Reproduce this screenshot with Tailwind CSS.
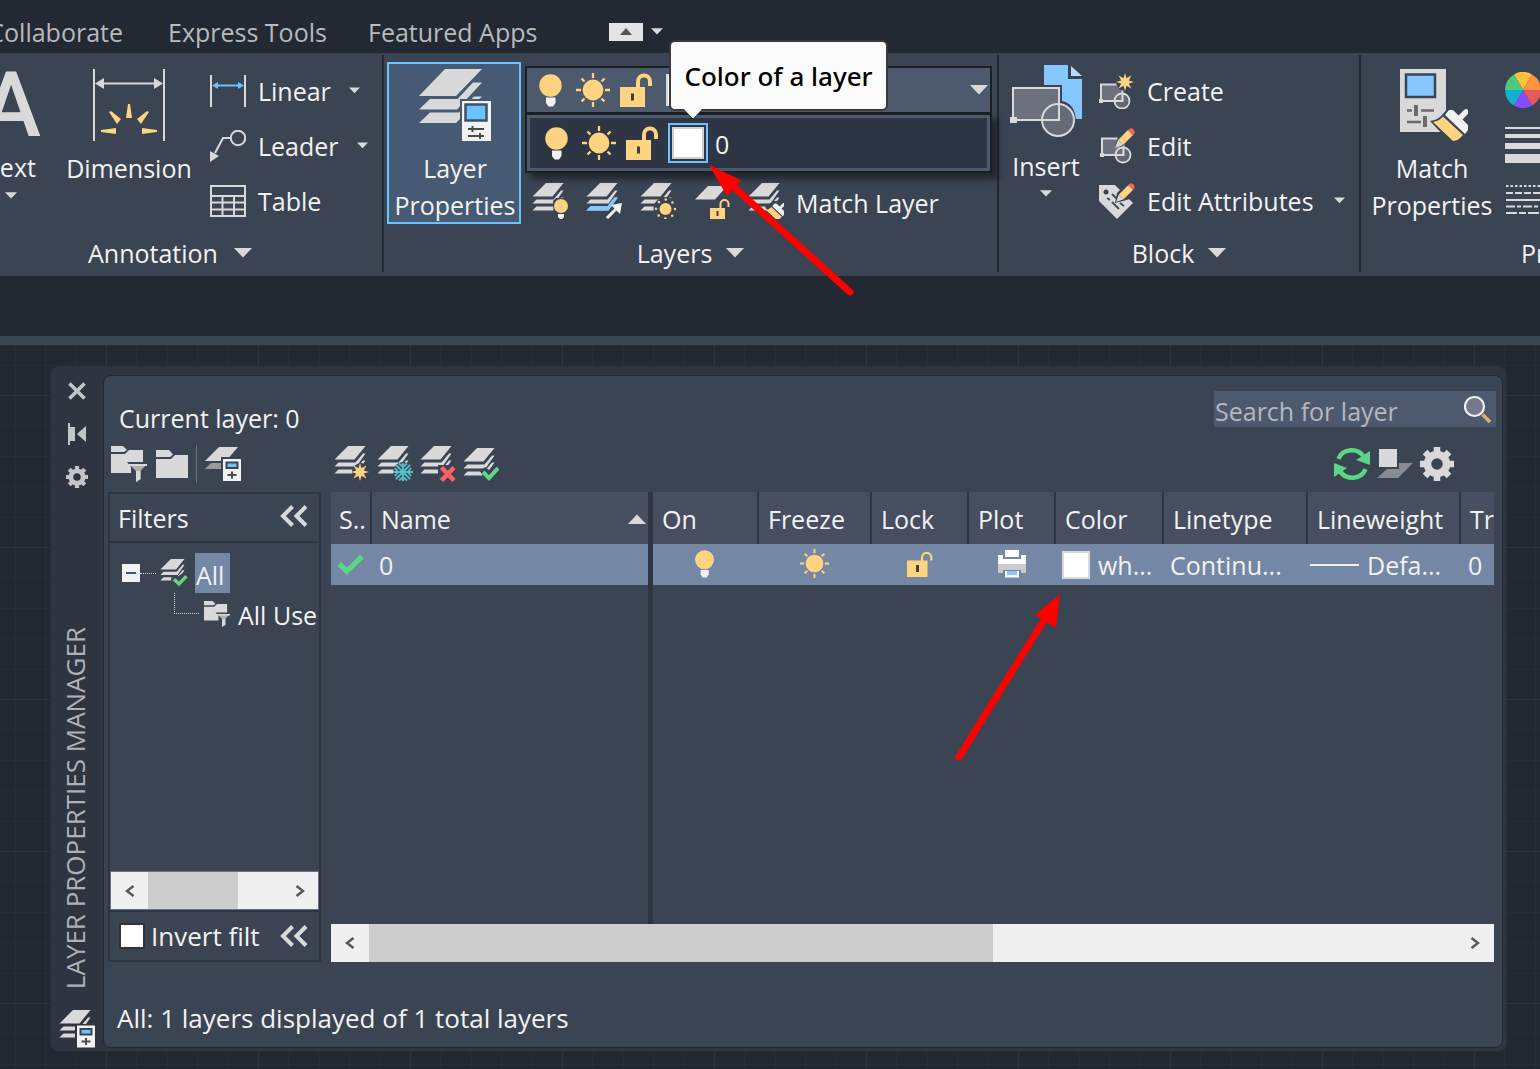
<!DOCTYPE html>
<html lang="en">
<head>
  <meta charset="UTF-8">
  <meta name="viewport" content="width=device-width, initial-scale=1.0">
  <title>Layer Properties Manager</title>
  <script src="https://cdn.jsdelivr.net/npm/@tailwindcss/browser@4"></script>
</head>
<body class="min-h-screen flex flex-col overflow-x-hidden bg-[#222933] text-[#f2f2f2] text-[25px] leading-9 font-['Open_Sans','Noto_Sans',sans-serif]">

<!-- ===================== Icon sprite ===================== -->
<svg class="hidden" aria-hidden="true">
  <symbol id="caret" viewBox="0 0 18 10"><path d="M0 0H18L9 9.500Z" fill="#d9d9d9"/></symbol>
  <symbol id="bulb" viewBox="0 0 23 33"><circle cx="11.500" cy="11.500" r="11.200" fill="#ffd37f"/><path d="M7 23.500H16.500V29L14 32.500H9.500L7 29Z" fill="#f2f2f2"/></symbol>
  <symbol id="sun" viewBox="0 0 34 34"><circle cx="17" cy="17" r="10.400" fill="#ffd37f"/><path d="M17 0V5M17 29V34M0 17H5M29 17H34M5.500 5.500L8.500 8.500M25.500 25.500L28.500 28.500M28.500 5.500L25.500 8.500M8.500 25.500L5.500 28.500" stroke="#ffd37f" stroke-width="2.300"/></symbol>
  <symbol id="lock" viewBox="0 0 33 34"><path d="M0 14H25V34H0Z" fill="#ffd37f"/><path d="M18 15V8.500a6 6 0 0 1 12 0V13" fill="none" stroke="#ffd37f" stroke-width="4"/><path d="M11 20.500H14V27.500H11Z" fill="#3b4048"/></symbol>
  <symbol id="lock-thin" viewBox="0 0 26 26"><path d="M0 9.500H20.500V26H0Z" fill="#ffd37f"/><path d="M15 10V6.500a4.700 4.700 0 0 1 9.400 0V9.500" fill="none" stroke="#ffd37f" stroke-width="2.200"/><path d="M9 14H12V21H9Z" fill="#3b4048"/></symbol>
  <!-- three stacked sheets, shared by every layer tool -->
  <symbol id="sheets" viewBox="0 0 36 36"><path d="M14 0H31.500L20.500 13.500H.5ZM.5 20.500L4.500 16.500H21.500L29 7.500H31.500L22.500 20.500ZM.5 27.500L4.500 23.500H21.500L29 14.500H31.500L22.500 27.500Z" fill="#d9d9d9"/></symbol>
  <symbol id="star" viewBox="0 0 18 18"><path d="M9 0L10.500 5.200L15.400 2.600L12.800 7.500L18 9L12.800 10.500L15.400 15.400L10.500 12.800L9 18L7.500 12.800L2.600 15.400L5.200 10.500L0 9L5.200 7.500L2.600 2.600L7.500 5.200Z" fill="#ffd37f"/></symbol>
  <symbol id="check" viewBox="0 0 26 20"><path d="M2 9.500L9.500 16.500L24 2.500" fill="none" stroke="#5cd685" stroke-width="5"/></symbol>
  <symbol id="card" viewBox="0 0 18 22"><path d="M0 0H18V22H0Z" fill="#f2f2f2"/><path d="M3.500 3.500H14.500V9H3.500Z" fill="#6cc1ff" stroke="#3b4453" stroke-width="2"/><path d="M4.500 16H13.500M9 12.500V19.500" stroke="#4a4a4a" stroke-width="2"/></symbol>
  <symbol id="brush" viewBox="0 0 38 32"><path d="M2 13Q8 12 12 7.500L32 26L28 30Q25 32 22 32Z" fill="#ffd37f"/><path d="M14 6L17.500 1.500Q20 0 22.500 1.500L37 16Q38.500 18.500 37 21L34 25Z" fill="#f2f2f2"/><path d="M28 10L35 3" stroke="#f2f2f2" stroke-width="5.500" stroke-linecap="round"/></symbol>
  <symbol id="pencil" viewBox="0 0 20 20"><path d="M3 12L13 2L18 7L8 17Z" fill="#ffd37f"/><path d="M13 2Q16 -1 18.500 1.500T18 7Z" fill="#ff5f62"/><path d="M3 12L8 17L0 20Z" fill="#d9d9d9"/></symbol>
  <symbol id="shapes" viewBox="0 0 36 27"><path d="M2 1.500H23.500V18H2Z" fill="#6c717e" stroke="#d9d9d9" stroke-width="2"/><path d="M0 16H4V20H0Z" fill="#d9d9d9"/><circle cx="23" cy="18" r="7.500" fill="#6c717e" fill-opacity=".8" stroke="#d9d9d9" stroke-width="1.800"/><path d="M23.500 11V18H16" fill="none" stroke="#d9d9d9" stroke-width="2"/></symbol>
  <symbol id="folder" viewBox="0 0 32 28"><path d="M0 0H13L17 4.500L14 7H0ZM0 9H15L19 5H32V28H0Z" fill="#d9d9d9"/></symbol>
  <symbol id="folder-filter" viewBox="0 0 36 36"><path d="M0 0H12L16 4L13 6H0ZM0 8H14L18 4H32V16H16L20 21V27H0Z" fill="#d9d9d9"/><path d="M18 18H36L29.500 25V33L25 36V25Z" fill="#b0b0b0"/><path d="M25 25H29.500V33L25 36ZM18 18H36V20H18Z" fill="#d9d9d9"/></symbol>
  <symbol id="gear" viewBox="0 0 34 34"><circle cx="17" cy="17" r="9.500" fill="none" stroke="currentColor" stroke-width="7.500"/><path d="M17 0V6M17 28V34M0 17H6M28 17H34M5 5L9 9M25 25L29 29M29 5L25 9M9 25L5 29" stroke="currentColor" stroke-width="6.500"/></symbol>
  <symbol id="collapse" viewBox="0 0 28 22"><path d="M12.500 1.500L3 11L12.500 20.500M26 1.500L16.500 11L26 20.500" fill="none" stroke="#d9d9d9" stroke-width="4"/></symbol>
  <symbol id="chev-left" viewBox="0 0 10 12"><path d="M8.500 1L2 6L8.500 11" fill="none" stroke="#5a5a5a" stroke-width="2.600"/></symbol>
  <symbol id="chev-right" viewBox="0 0 10 12"><path d="M1.500 1L8 6L1.500 11" fill="none" stroke="#5a5a5a" stroke-width="2.600"/></symbol>
</svg>

<!-- ===================== Ribbon tabs ===================== -->
<nav class="flex items-center h-[53px] pt-[14px] pb-1 text-[#b8babd] shrink-0">
  <a href="#" class="w-[123px] flex justify-end whitespace-nowrap">Collaborate</a>
  <a href="#" class="ml-[45px] w-[155px] whitespace-nowrap">Express Tools</a>
  <a href="#" class="ml-[45px] w-[170px] whitespace-nowrap">Featured Apps</a>
  <button class="ml-[71px] flex items-center gap-2" aria-label="Minimize ribbon">
    <svg class="w-[34px] h-[18px]" viewBox="0 0 34 18"><path d="M0 0H34V18H0Z" fill="#e4e4e4"/><path d="M17 5L23 12H11Z" fill="#555"/></svg>
    <svg class="w-3 h-[7px]"><use href="#caret"/></svg>
  </button>
</nav>

<!-- ===================== Ribbon ===================== -->
<header class="flex h-[223px] shrink-0 bg-[#3b4453] pt-[2px] pb-1">

  <!-- Annotation -->
  <section class="w-[384px] shrink-0 flex flex-col border-r-2 border-[#222831]">
    <div class="flex h-[181px]">
      <button class="-ml-[31px] w-[84px] shrink-0 flex flex-col items-center pt-[13px]">
        <span class="h-[81px] text-[90px] leading-[76px] font-medium text-[#d9d9d9] font-['Roboto',sans-serif]">A</span>
        <span>Text</span>
        <svg class="mt-[7px] w-3 h-[7px]"><use href="#caret"/></svg>
      </button>
      <button class="ml-px w-[150px] shrink-0 flex flex-col items-center pt-[14px]">
        <svg class="w-[72px] h-[72px] mb-[9px]" viewBox="0 0 72 72">
          <path d="M1 0V72M71 0V72M6 14.500H66" stroke="#d9d9d9" stroke-width="2"/>
          <path d="M2 14.500L11 9V20ZM70 14.500L61 9V20Z" fill="#d9d9d9"/>
          <path d="M35 35H37L39 49H33ZM16 43L18 42L28 50L24 55ZM56 43L54 42L44 50L48 55ZM8 61L23 59V65L8 63ZM64 61L49 59V65L64 63Z" fill="#ffd37f"/>
        </svg>
        <span>Dimension</span>
      </button>
      <div class="flex-1 flex flex-col pl-[6px] pt-2 whitespace-nowrap">
        <button class="flex items-center h-[55px] gap-3">
          <svg class="w-9 h-8" viewBox="0 0 36 32"><path d="M1 0V32M35 0V32" stroke="#d9d9d9" stroke-width="2"/><path d="M6 10.500H30" stroke="#6cc1ff" stroke-width="2"/><path d="M2 10.500L8 7V14ZM34 10.500L28 7V14Z" fill="#6cc1ff"/></svg>
          <span>Linear</span>
          <svg class="ml-[6px] w-[11px] h-[7px]"><use href="#caret"/></svg>
        </button>
        <button class="flex items-center h-[55px] gap-3">
          <svg class="w-9 h-8" viewBox="0 0 36 32"><circle cx="28" cy="8" r="7.200" fill="none" stroke="#d9d9d9" stroke-width="2"/><path d="M21 8H13L5 23" fill="none" stroke="#d9d9d9" stroke-width="2"/><path d="M0 21L9 26L0 32Z" fill="#d9d9d9"/></svg>
          <span>Leader</span>
          <svg class="ml-[6px] w-[11px] h-[7px]"><use href="#caret"/></svg>
        </button>
        <button class="flex items-center h-[55px] gap-3">
          <svg class="w-9 h-8" viewBox="0 0 36 32"><path d="M1 1H35V31H1ZM1 11H35M1 17.500H35M1 24.500H35M12.500 11V31M24 11V31" fill="none" stroke="#d9d9d9" stroke-width="2"/></svg>
          <span>Table</span>
        </button>
      </div>
    </div>
    <button class="flex items-center gap-4 self-start mt-[3px] ml-[88px] h-10">Annotation <svg class="w-[18px] h-[10px]"><use href="#caret"/></svg></button>
  </section>

  <!-- Layers -->
  <section class="w-[615px] shrink-0 flex flex-col border-r-2 border-[#222831]">
    <div class="flex h-[181px] pl-[3px] gap-1">
      <button class="mt-[7px] w-[134px] h-[162px] shrink-0 flex flex-col items-center pt-[5px] border-2 border-[#6cc1ff] bg-[#465b73] leading-[37px]">
        <svg class="ml-[2px] w-[72px] h-[74px] mb-[7px] shrink-0" viewBox="0 0 72 74">
          <path d="M26 0H63L37 27H0ZM0 40.500L11 30H38.500L54 13.500H63L38 40.500ZM0 54L11 43.500H40L55 27.500H63L37 54Z" fill="#d9d9d9"/>
          <path d="M41 30H72V74H41Z" fill="#465b73"/><path d="M43 32H72V72H43Z" fill="#f2f2f2"/>
          <path d="M46.500 35.500H67.500V51.500H46.500Z" fill="#6cc1ff" stroke="#3e5068" stroke-width="2.500"/>
          <path d="M49 60H65M49 67H65M53.500 57V63M61 64V70" stroke="#4a4a4a" stroke-width="2"/>
        </svg>
        <span class="ml-[2px]">Layer</span>
        <span class="ml-[2px]">Properties</span>
      </button>

      <div class="relative w-[467px] pt-[11px]">
        <button class="relative w-full h-12 flex items-center pl-3 bg-[#4d5a6e] border-2 border-[#1b2027]" aria-haspopup="listbox" aria-expanded="true" aria-label="Current layer">
          <svg class="w-[23px] h-[33px]"><use href="#bulb"/></svg>
          <svg class="ml-[14px] w-[34px] h-[34px]"><use href="#sun"/></svg>
          <svg class="ml-[10px] w-[33px] h-[34px]"><use href="#lock"/></svg>
          <span class="ml-[13px] w-8 h-8 bg-white border-2 border-[#d9d9d9]"></span>
          <svg class="ml-auto mr-[2px] w-[18px] h-[10px]"><use href="#caret"/></svg>
        </button>

        <!-- open layer list -->
        <ul class="absolute left-0 top-[58px] w-full h-[60px] p-[3px] bg-[#4d5a6e] border-2 border-[#1b2027] shadow-[6px_6px_6px_rgba(0,0,0,0.45)]" role="listbox" aria-label="Layers">
          <li class="h-full flex items-center pl-[15px] bg-[#2e3645]" role="option" aria-selected="true">
            <svg class="w-[23px] h-[33px]"><use href="#bulb"/></svg>
            <svg class="ml-[14px] w-[34px] h-[34px]"><use href="#sun"/></svg>
            <svg class="ml-[10px] w-[33px] h-[34px]"><use href="#lock"/></svg>
            <button class="ml-[9px] w-10 h-10 p-[2px] border-2 border-[#6cc1ff]" aria-label="Layer color"><span class="block w-8 h-8 bg-white border-2 border-[#d0d0d0]"></span></button>
            <span class="ml-[7px] pt-[2px]">0</span>
          </li>
        </ul>

        <!-- callout -->
        <div class="absolute z-10 left-[144px] -top-[15px] w-[219px] h-[71px] flex items-center justify-center rounded-md border-2 border-[#3a3a3a] bg-[#fcfcfc] text-black text-[26px] font-medium font-['Noto_Sans',sans-serif] whitespace-nowrap" role="tooltip">Color of a layer
          <svg class="absolute left-3 top-[66px] w-[20px] h-[12px]" viewBox="0 0 20 12"><path d="M0 0H20L10 11Z" fill="#fcfcfc"/><path d="M0 1L10 11L20 1" fill="none" stroke="#3a3a3a"/></svg>
        </div>
        <svg class="absolute z-10 left-[180px] top-[106px] w-[152px] h-[136px]" viewBox="0 0 152 136"><path d="M20 18L145 131" stroke="#f00" stroke-width="7" stroke-linecap="round"/><path d="M4 4L36 19L22 35Z" fill="#f00"/></svg>

        <div class="mt-[67px] pl-[7px] flex items-center gap-[18px]">
          <button aria-label="Off"><svg class="w-9 h-9" viewBox="0 0 36 36"><use href="#sheets"/><path d="M21 18L24 15H36V36H22Z" fill="#3b4453"/><circle cx="29" cy="23" r="7" fill="#ffd37f"/><path d="M26 31H32V34L30 36H28L26 34Z" fill="#f2f2f2"/></svg></button>
          <button aria-label="Make current"><svg class="w-9 h-9" viewBox="0 0 36 36"><use href="#sheets"/><path d="M.5 27.500L4.500 23H21.500L28 14.500H32L22.500 27.500Z" fill="#84c8ff"/><path d="M21 35L31 25" stroke="#3b4453" stroke-width="6"/><path d="M21 35L31 25" stroke="#f2f2f2" stroke-width="3"/><path d="M36 20L34 31L25 22Z" fill="#f2f2f2"/></svg></button>
          <button aria-label="Freeze"><svg class="w-9 h-9" viewBox="0 0 36 36"><use href="#sheets"/><circle cx="25.500" cy="26" r="12" fill="#3b4453"/><circle cx="25.500" cy="26" r="6" fill="#ffd37f"/><circle cx="25.500" cy="26" r="9.500" fill="none" stroke="#ffd37f" stroke-width="2.600" stroke-dasharray="0 7.460" stroke-linecap="round"/></svg></button>
          <button aria-label="Lock"><svg class="w-9 h-9" viewBox="0 0 36 36"><path d="M14 3H33L21 16.500H1Z" fill="#d9d9d9"/><path d="M24 16H36V36H24Z" fill="#3b4453"/><path d="M16 25H31V36H16Z" fill="#ffd37f"/><path d="M26.500 25V21a4 4 0 0 1 8 0V24" fill="none" stroke="#ffd37f" stroke-width="2"/><path d="M22.500 28H24.500V33H22.500Z" fill="#3b4453"/></svg></button>
          <button class="flex items-center gap-3 whitespace-nowrap"><svg class="w-9 h-9" viewBox="0 0 36 36"><use href="#sheets"/><path d="M17 24L25 18H36V36H26Z" fill="#3b4453"/><use href="#brush" x="17" y="20" width="20" height="17"/></svg><span class="pt-1">Match Layer</span></button>
        </div>
      </div>
    </div>
    <button class="flex items-center gap-[14px] self-center mt-[3px] h-10">Layers <svg class="w-[18px] h-[10px]"><use href="#caret"/></svg></button>
  </section>

  <!-- Block -->
  <section class="w-[362px] shrink-0 flex flex-col border-r-2 border-[#222831]">
    <div class="flex h-[181px]">
      <button class="ml-[6px] w-[82px] shrink-0 flex flex-col items-center pt-[10px]">
        <svg class="w-[72px] h-[72px] mb-[11px]" viewBox="0 0 72 72">
          <path d="M34 0H58V14H72V54H66Q64 38 52 36V20H34Z" fill="#84c8ff"/><path d="M61 1L72 11H61Z" fill="#b5dcff"/>
          <path d="M3 23H49V55H3Z" fill="#6c717e" stroke="#d9d9d9" stroke-width="2"/><path d="M0 52H7V58H0Z" fill="#d9d9d9"/>
          <circle cx="48" cy="55" r="16" fill="#6c717e" fill-opacity=".85" stroke="#d9d9d9" stroke-width="2"/><path d="M49 39V55H32" fill="none" stroke="#d9d9d9" stroke-width="2"/>
        </svg>
        <span>Insert</span>
        <svg class="mt-[6px] w-3 h-[7px]"><use href="#caret"/></svg>
      </button>
      <div class="flex-1 flex flex-col pl-3 pt-2 whitespace-nowrap">
        <button class="flex items-center h-[55px] gap-3">
          <svg class="w-9 h-9" viewBox="0 0 36 36"><use href="#shapes" y="10" width="36" height="27"/><circle cx="26" cy="9" r="9" fill="#3b4453"/><use href="#star" x="17" width="18" height="18"/></svg>
          <span>Create</span>
        </button>
        <button class="flex items-center h-[55px] gap-3">
          <svg class="w-9 h-9" viewBox="0 0 36 36"><use href="#shapes" x="1" y="9" width="36" height="27"/><path d="M16 19L19 9L30 -2L38 4L24 18Z" fill="#3b4453"/><use href="#pencil" x="16" width="20" height="20"/></svg>
          <span>Edit</span>
        </button>
        <button class="flex items-center h-[55px] gap-3">
          <svg class="w-9 h-9" viewBox="0 0 36 36"><path d="M0 2H16L34 20L18 36L0 18Z" fill="#d9d9d9"/><circle cx="7" cy="9" r="2.500" fill="#3b4453"/><path d="M8 15L11 17M13 11L20 18M13 19L20 26M21 20L25 23" stroke="#4a4f58" stroke-width="2"/><path d="M16 20L18 10L30 -2L38 4V14L24 18Z" fill="#3b4453"/><use href="#pencil" x="17" width="19" height="19"/></svg>
          <span>Edit Attributes</span>
          <svg class="ml-2 w-[11px] h-[7px]"><use href="#caret"/></svg>
        </button>
      </div>
    </div>
    <button class="flex items-center gap-[14px] self-center mt-[3px] h-10">Block <svg class="w-[18px] h-[10px]"><use href="#caret"/></svg></button>
  </section>

  <!-- Properties, runs past the window edge -->
  <section class="flex-1 min-w-0 overflow-hidden flex flex-col">
    <div class="flex h-[181px]">
      <button class="ml-[3px] w-[136px] shrink-0 flex flex-col items-center pt-[14px] leading-[37px]">
        <svg class="ml-1 w-[68px] h-[72px] mb-[9px] shrink-0" viewBox="0 0 68 72">
          <path d="M0 0H46V63H0Z" fill="#d9d9d9"/><path d="M6 5.500H35V28H6Z" fill="#84c8ff" stroke="#3b4453" stroke-width="2.500"/>
          <path d="M7 41.500H12M21 41.500H34M7 53H21" stroke="#6a6a6a" stroke-width="2.500"/><path d="M14 36H18V47H14ZM23 47H27V58H23Z" fill="#6a6a6a"/>
          <path d="M30 52Q38 51 42 46L48 39L68 42V72H49Z" fill="#3b4453"/><use href="#brush" x="31" y="40" width="38" height="32"/>
        </svg>
        <span>Match</span>
        <span>Properties</span>
      </button>
      <div class="flex flex-col pl-[5px] pt-[17px] gap-[19px]">
        <svg class="w-9 h-9" viewBox="0 0 36 36"><path d="M18 18L9 2.400A18 18 0 0 1 27 2.400Z" fill="#ffc13b"/><path d="M18 18L27 2.400A18 18 0 0 1 36 18Z" fill="#ff9340"/><path d="M18 18H36A18 18 0 0 1 27 33.600Z" fill="#e65a5a"/><path d="M18 18L27 33.600A18 18 0 0 1 9 33.600Z" fill="#854dff"/><path d="M18 18L9 33.600A18 18 0 0 1 0 18Z" fill="#12b0cf"/><path d="M18 18H0A18 18 0 0 1 9 2.400Z" fill="#4ccb7d"/></svg>
        <svg class="w-9 h-9" viewBox="0 0 36 36"><path d="M0 0H36V2H0ZM0 7H36V11H0ZM0 16H36V22H0ZM0 27H36V36H0Z" fill="#d9d9d9"/></svg>
        <svg class="w-9 h-9" viewBox="0 0 36 36" stroke="#d9d9d9" stroke-width="2"><path d="M1 4H36" stroke-dasharray="2.500 2"/><path d="M1 11H36" stroke-dasharray="7 2"/><path d="M1 18H36"/><path d="M1 24.500H36" stroke-dasharray="9 2 4 2"/><path d="M1 31H36" stroke-dasharray="11 2 7 2"/></svg>
      </div>
    </div>
    <button class="flex items-center self-start mt-[3px] ml-[160px] h-10">Properties</button>
  </section>
</header>

<div class="h-[60px] shrink-0"></div>
<div class="h-[9px] shrink-0 bg-[#3b4453]"></div>

<!-- ===================== Drawing area ===================== -->
<main class="relative flex-1 flex bg-[#212830] pt-[21px] pr-[33px] pb-[17px] pl-[50px]">
  <svg class="absolute inset-0 w-full h-full" aria-hidden="true">
    <defs>
      <pattern id="grid" x="106" y="50" width="152" height="152" patternUnits="userSpaceOnUse">
        <path d="M30.500 0V152M61.500 0V152M91.500 0V152M122.500 0V152M0 30.500H152M0 61.500H152M0 91.500H152M0 122.500H152" stroke="#252d37"/>
        <path d="M.5 0V152M0 .5H152" stroke="#2d3541"/>
      </pattern>
    </defs>
    <rect width="100%" height="100%" fill="url(#grid)"/>
  </svg>

  <!-- Palette -->
  <section class="relative flex-1 min-w-0 flex rounded-lg bg-[#2e3440] border border-[#272e39] pt-2 pr-[3px] pb-[3px]">
    <!-- Title strip -->
    <div class="w-[52px] shrink-0 flex flex-col items-center text-[#c3c5c8]">
      <button class="mt-[7px]" aria-label="Close"><svg class="w-[18px] h-[18px]" viewBox="0 0 18 18"><path d="M1.500 1.500L16.500 16.500M16.500 1.500L1.500 16.500" stroke="currentColor" stroke-width="3.600"/></svg></button>
      <button class="mt-[23px]" aria-label="Auto-hide"><svg class="w-[18px] h-[22px]" viewBox="0 0 18 22"><path d="M0 0H2V4H7V18H2V22H0ZM18 3V19L9 11Z" fill="currentColor"/></svg></button>
      <button class="mt-[21px]" aria-label="Palette settings"><svg class="w-[22px] h-[22px]"><use href="#gear"/></svg></button>
      <h2 class="mt-auto mr-1 rotate-180 [writing-mode:vertical-rl] text-[26px] leading-8 text-[#aeb1b6] whitespace-nowrap">LAYER PROPERTIES MANAGER</h2>
      <svg class="mt-[21px] w-9 h-[38px] shrink-0" viewBox="0 0 36 38"><use href="#sheets" width="36" height="36"/><path d="M16 14H36V38H16Z" fill="#2e3440"/><use href="#card" x="18" y="15" width="18" height="23"/></svg>
    </div>

    <div class="flex-1 min-w-0 flex flex-col rounded-lg border border-[#222834] bg-[#3b4453] pl-1 pr-[8px]">
      <div class="mt-[15px] h-9 flex justify-between -mr-[2px]">
        <p class="pl-[11px] pt-[9px] whitespace-nowrap">Current layer: 0</p>
        <label class="w-[282px] h-9 flex items-center bg-[#4d5a6e]">
          <input type="text" placeholder="Search for layer" aria-label="Search for layer" class="w-[246px] pl-px pt-1 bg-transparent outline-none placeholder:text-[#b4b8bf]">
          <svg class="ml-[3px] w-[29px] h-[29px]" viewBox="0 0 29 29"><circle cx="11.500" cy="11.500" r="9.500" fill="#747a89" stroke="#f2f2f2" stroke-width="2.200"/><path d="M19.500 19.500L27 27" stroke="#deb06c" stroke-width="3.500"/></svg>
        </label>
      </div>

      <!-- Palette toolbar -->
      <div class="mt-[19px] h-9 flex items-center">
        <div class="pl-[3px] w-[226px] flex items-center">
          <button aria-label="New property filter"><svg class="w-9 h-9"><use href="#folder-filter"/></svg></button>
          <button class="ml-[9px]" aria-label="New group filter"><svg class="w-8 h-7"><use href="#folder"/></svg></button>
          <span class="mx-2 w-px h-[38px] bg-[#6b7280]"></span>
          <button aria-label="Layer states manager"><svg class="w-9 h-9" viewBox="0 0 36 36"><path d="M14 1H33L21 15H0Z" fill="#d9d9d9"/><path d="M6 17H18V23H0Z" fill="#9a9a9a"/><path d="M16 11H36V36H16Z" fill="#3b4453"/><use href="#card" x="18" y="13" width="18" height="22"/></svg></button>
        </div>
        <div class="flex items-center gap-[7px]">
          <button aria-label="New layer"><svg class="w-9 h-9" viewBox="0 0 36 36"><use href="#sheets"/><circle cx="27" cy="26" r="9" fill="#3b4453"/><use href="#star" x="17" y="17" width="18" height="18"/></svg></button>
          <button aria-label="New layer frozen in viewports"><svg class="w-9 h-9" viewBox="0 0 36 36"><use href="#sheets"/><circle cx="26" cy="26" r="10" fill="#3b4453"/><path d="M26 17V35M16 26H36M19 19L33 33M33 19L19 33M22 17.500L26 21L30 17.500M22 34.500L26 31L30 34.500M18 22L21 26L18 30M34 22L31 26L34 30" fill="none" stroke="#58bcc6" stroke-width="2"/></svg></button>
          <button aria-label="Delete layer"><svg class="w-9 h-9" viewBox="0 0 36 36"><use href="#sheets"/><path d="M18 19H36V36H18Z" fill="#3b4453"/><path d="M21.500 21.500L34 34.500M34 21.500L21.500 34.500" stroke="#ff5f62" stroke-width="4.500"/></svg></button>
          <button aria-label="Set current"><svg class="w-9 h-9" viewBox="0 0 36 36"><use href="#sheets" y="2"/><path d="M17 25L22 21L26 24L33 18L36 20V34H22Z" fill="#3b4453"/><path d="M20 26L26 32L35 22" fill="none" stroke="#5cd685" stroke-width="4"/></svg></button>
        </div>
        <div class="ml-auto mr-10 flex items-center gap-[7px]">
          <button aria-label="Refresh"><svg class="w-9 h-[34px]" viewBox="0 0 36 34"><path d="M4.500 12A14 13 0 0 1 30 10M31.500 22A14 13 0 0 1 6 24" fill="none" stroke="#5cd685" stroke-width="4.500"/><path d="M36 4V18L22 13ZM0 30V16L13 21Z" fill="#5cd685"/></svg></button>
          <button aria-label="Toggle override highlight"><svg class="w-9 h-[30px]" viewBox="0 0 36 30"><path d="M10 20H22V14H36L21 29H0Z" fill="#868b94"/><path d="M2 0H20V18H2Z" fill="#d9d9d9"/></svg></button>
          <button class="text-[#d9d9d9]" aria-label="Settings"><svg class="w-[34px] h-[34px]"><use href="#gear"/></svg></button>
        </div>
      </div>

      <div class="mt-[10px] flex-1 flex gap-[10px]">
        <!-- Filter tree -->
        <aside class="w-[213px] shrink-0 flex flex-col border-2 border-[#2e3440]">
          <div class="h-[49px] flex items-center justify-between pl-2 pr-[11px] border-b-2 border-[#2e3440]">
            <h3>Filters</h3>
            <button class="-mt-1" aria-label="Collapse filters"><svg class="w-7 h-[22px]"><use href="#collapse"/></svg></button>
          </div>
          <ul class="flex-1 pt-[10px] overflow-hidden whitespace-nowrap">
            <li class="relative flex items-center h-10 pl-3">
              <button class="w-[18px] h-[18px] flex items-center justify-center bg-[#f2f2f2]" aria-label="Collapse tree"><span class="w-[10px] h-[2px] bg-[#3a50a8]"></span></button>
              <span class="w-4 border-t border-dotted border-[#d9d9d9]"></span>
              <svg class="ml-1 w-7 h-7" viewBox="0 0 36 36"><use href="#sheets"/><path d="M14 24L24 22L33 15L36 18V36H16Z" fill="#3b4453"/><path d="M18 26L24.500 32L34 22" fill="none" stroke="#5cd685" stroke-width="4.500"/></svg>
              <span class="ml-[7px] px-px pt-1 w-[35px] h-10 bg-[#7487a5]">All</span>
            </li>
            <li class="flex items-start h-10 pl-16">
              <span class="w-[25px] h-[21px] shrink-0 border-l border-b border-dotted border-[#d9d9d9]"></span>
              <svg class="ml-1 mt-2 w-7 h-[26px] shrink-0"><use href="#folder-filter"/></svg>
              <span class="ml-[7px] mt-1">All Use</span>
            </li>
          </ul>
          <div class="mx-px mb-px h-[37px] flex items-center bg-[#f0f0f0] outline outline-[#6b7280]">
            <button class="w-[37px] flex justify-center" aria-label="Scroll left"><svg class="w-[10px] h-3"><use href="#chev-left"/></svg></button>
            <span class="w-[90px] h-full bg-[#cdcdcd]"></span>
            <button class="ml-auto w-[37px] flex justify-center" aria-label="Scroll right"><svg class="w-[10px] h-3"><use href="#chev-right"/></svg></button>
          </div>
          <div class="h-[50px] flex items-center pl-[9px] pr-[11px] border-t-2 border-[#2e3440]">
            <input id="invert" type="checkbox" class="appearance-none w-[26px] h-[26px] shrink-0 bg-white border-2 border-[#333]">
            <label for="invert" class="ml-[6px] w-[115px] text-[26px] whitespace-nowrap">Invert filt</label>
            <button class="ml-auto shrink-0" aria-label="Collapse filter pane"><svg class="w-7 h-[22px]"><use href="#collapse"/></svg></button>
          </div>
        </aside>

        <!-- Layer list -->
        <div class="relative flex-1 min-w-0 flex flex-col">
          <div class="flex-1 flex">
            <table class="w-[317px] shrink-0 self-start table-fixed whitespace-nowrap text-left">
              <thead class="bg-[#464e60]">
                <tr class="h-[52px]">
                  <th class="w-[40px] pl-2 pt-[2px] font-normal border-r-2 border-[#2e3440]">S..</th>
                  <th class="pl-[9px] pt-[2px] font-normal"><span class="flex items-center justify-between">Name <svg class="mr-[2px] w-[18px] h-[10px] rotate-180"><use href="#caret"/></svg></span></th>
                </tr>
              </thead>
              <tbody>
                <tr class="h-[41px] bg-[#7487a5]">
                  <td class="pl-[6px]"><svg class="w-[27px] h-[21px]"><use href="#check"/></svg></td>
                  <td class="pl-[8px]">0</td>
                </tr>
              </tbody>
            </table>
            <div class="w-[5px] shrink-0 bg-[#2e3440]"></div>
            <div class="flex-1 min-w-0 overflow-hidden">
              <table class="w-full table-fixed whitespace-nowrap text-left">
                <thead class="bg-[#464e60]">
                  <tr class="h-[52px]">
                    <th class="w-[105px] pl-[9px] pt-[2px] font-normal border-r-2 border-[#2e3440]">On</th>
                    <th class="w-[113px] pl-[9px] pt-[2px] font-normal border-r-2 border-[#2e3440]">Freeze</th>
                    <th class="w-[97px] pl-[9px] pt-[2px] font-normal border-r-2 border-[#2e3440]">Lock</th>
                    <th class="w-[87px] pl-[9px] pt-[2px] font-normal border-r-2 border-[#2e3440]">Plot</th>
                    <th class="w-[108px] pl-[9px] pt-[2px] font-normal border-r-2 border-[#2e3440]">Color</th>
                    <th class="w-[144px] pl-[9px] pt-[2px] font-normal border-r-2 border-[#2e3440]">Linetype</th>
                    <th class="w-[153px] pl-[9px] pt-[2px] font-normal border-r-2 border-[#2e3440]">Lineweight</th>
                    <th class="pl-[9px] pt-[2px] font-normal overflow-hidden">Transparency</th>
                  </tr>
                </thead>
                <tbody>
                  <tr class="h-[41px] bg-[#7487a5]">
                    <td class="pr-[2px] pb-[2px]"><svg class="mx-auto w-[23px] h-7"><use href="#bulb"/></svg></td>
                    <td class="pb-[2px]"><svg class="mx-auto w-[29px] h-[29px]"><use href="#sun"/></svg></td>
                    <td class="pb-[2px]"><svg class="mx-auto w-[26px] h-[26px]"><use href="#lock-thin"/></svg></td>
                    <td class="pb-[2px]"><svg class="mx-auto w-7 h-7" viewBox="0 0 28 28"><path d="M7 0H21V7H7Z" fill="#fff"/><path d="M0 5H5V9H23V5H28V14H0Z" fill="#fff"/><path d="M0 14H28V23H23V20H5V23H0Z" fill="#ccc"/><path d="M7 21H21V27.500H7Z" fill="#fff"/><path d="M9 21H19V25H9Z" fill="#84c8ff"/></svg></td>
                    <td class="pl-[7px]"><span class="flex items-center gap-2"><span class="w-7 h-7 shrink-0 bg-white border-2 border-[#d9d9d9]"></span>wh...</span></td>
                    <td class="pl-[7px]">Continu...</td>
                    <td class="pl-[3px]"><span class="flex items-center gap-2"><span class="w-[49px] h-[2px] bg-[#f2f2f2]"></span>Defa...</span></td>
                    <td class="pl-[8px]">0</td>
                  </tr>
                </tbody>
              </table>
            </div>
          </div>
          <div class="h-[38px] flex items-center bg-[#f0f0f0]">
            <button class="w-[38px] flex justify-center" aria-label="Scroll left"><svg class="w-[10px] h-3"><use href="#chev-left"/></svg></button>
            <span class="w-[624px] h-full bg-[#cdcdcd]"></span>
            <button class="ml-auto w-[39px] flex justify-center" aria-label="Scroll right"><svg class="w-[10px] h-3"><use href="#chev-right"/></svg></button>
          </div>
          <!-- pointer to the Color cell -->
          <svg class="absolute left-[620px] top-[100px] w-[112px] h-[172px]" viewBox="0 0 112 172"><path d="M8 165L98 20" stroke="#f00" stroke-width="7" stroke-linecap="round"/><path d="M109 2L105 36L84 23Z" fill="#f00"/></svg>
        </div>
      </div>

      <p class="h-[85px] pt-[38px] pl-[9px] text-[26px] whitespace-nowrap">All: 1 layers displayed of 1 total layers</p>
    </div>
  </section>
</main>

</body>
</html>
